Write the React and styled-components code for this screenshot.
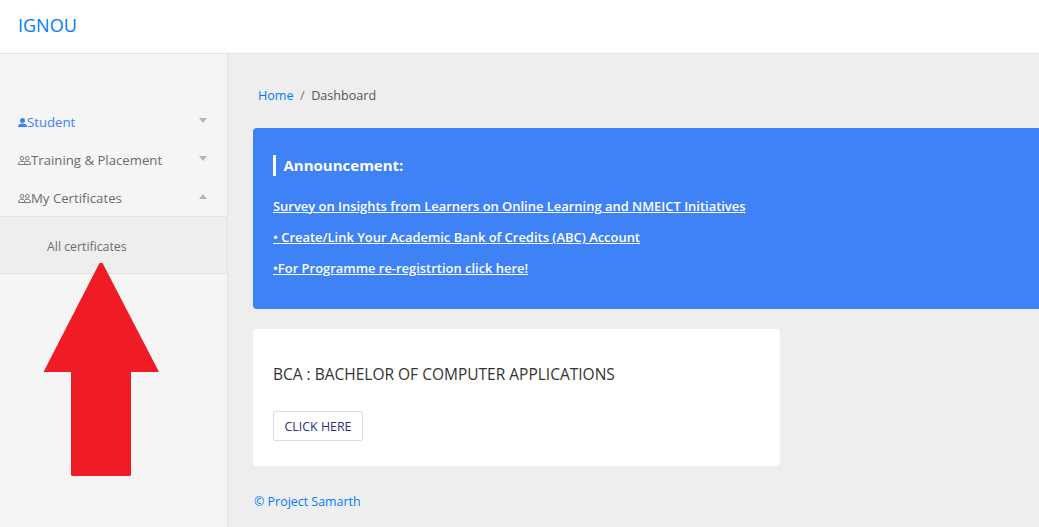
import React from "react";
import styled, { createGlobalStyle } from "styled-components";

const Global = createGlobalStyle`
  html, body { margin: 0; padding: 0; background: #eee; }
  body { font-family: "Open Sans", "Noto Sans", sans-serif; font-size: 13px; }
  * { box-sizing: border-box; }
`;
const Page = styled.div`
  width: 1039px; height: 527px; overflow: hidden; display: flex; flex-direction: column; position: relative;
`;
const Header = styled.header`
  height: 54px; flex: none; background: #fff; border-bottom: 1px solid #e3e3e3;
  display: flex; align-items: center; padding: 0 0 3px 18px;
`;
const Brand = styled.a`color: #007bff; font-size: 18px; line-height: 24px;`;
const Body = styled.div`flex: 1; display: flex; min-height: 0;`;
const Sidebar = styled.aside`
  width: 228px; flex: none; background: #f5f5f5; border-right: 1px solid #e3e3e3; padding-top: 49px;
`;
const NavRow = styled.div`
  height: 38px; display: flex; align-items: center; padding: 0 20px 0 18px;
  color: ${p => (p.$active ? "#3b82f6" : "#6c6c6c")}; font-size: 13.2px;
`;
const NavLabel = styled.span`flex: 1;`;
const Caret = styled.span`
  width: 0; height: 0; border-left: 4.5px solid transparent; border-right: 4.5px solid transparent;
  ${p => (p.$up ? "border-bottom: 5px solid #b5b5b5;" : "border-top: 5px solid #b5b5b5;")}
  margin-top: -3px;
`;
const SubMenu = styled.div`
  height: 58px; background: #eee; border-top: 1px solid #e3e3e3; border-bottom: 1px solid #e3e3e3;
  display: flex; align-items: center; padding: 2px 0 0 47px; color: #6c6c6c; font-size: 12.3px; margin-top: -1px;
`;
const Main = styled.main`flex: 1; padding: 0 0 0 25px; min-width: 0; background: #eee;`;
const Breadcrumb = styled.nav`
  display: flex; align-items: center; height: 18px; margin: 32px 0 0 5px; font-size: 12.6px; color: #555;
`;
const Crumb = styled.a`color: #007bff;`;
const Sep = styled.span`margin: 0 6.5px; color: #777;`;
const Announcement = styled.section`
  width: 830px; height: 181px; margin-top: 24px; background: #3e82f6; border-radius: 4px 0 0 4px;
  padding: 27px 20px 0; color: #fff;
`;
const Title = styled.h2`
  margin: 0 0 22px; height: 21px; border-left: 3px solid #fff; padding-left: 7.5px;
  font-size: 15px; line-height: 21px; font-weight: 700;
`;
const Notice = styled.a`
  display: block; color: #fff; font-weight: 600; font-size: 12.95px; line-height: 17px;
  text-decoration: underline; margin-bottom: 14px;
`;
const Card = styled.section`
  width: 527px; height: 137px; margin-top: 20px; background: #fff; border-radius: 4px;
  padding: 34px 20px 0;
`;
const CardTitle = styled.h3`
  margin: 0 0 26px; font-size: 15.5px; line-height: 22px; font-weight: 400; color: #333;
`;
const Btn = styled.button`
  height: 30px; width: 90px; background: #fff; border: 1px solid #ddd; border-radius: 2px;
  color: #2a2f85; font: 400 12.4px "Open Sans", sans-serif; padding: 0;
`;
const Footer = styled.footer`margin: 27px 0 0 1px; color: #007bff; font-size: 12.45px; line-height: 17px;`;
const ArrowOverlay = styled.svg`position: absolute; left: 44px; top: 263px;`;
const Glyph = styled.svg`flex: none;`;

const UserIcon = () => (
  <Glyph width="9" height="9" viewBox="0 0 9 9">
    <circle cx="4.5" cy="2.5" r="2.5" fill="#3b82f6" />
    <path d="M0 9 C0 6.4 2 5.6 4.5 5.6 S9 6.4 9 9Z" fill="#3b82f6" />
  </Glyph>
);
const UsersIcon = () => (
  <Glyph width="13" height="9" viewBox="0 0 13 9" fill="none" stroke="#6c6c6c" strokeWidth="0.9">
    <circle cx="4" cy="2.3" r="1.8" />
    <circle cx="9.3" cy="2.3" r="1.8" />
    <path d="M.5 8.5 C.5 6 2 5.3 4 5.3 S7 6 7 8.5Z" />
    <path d="M7 5.6 C7.6 5.4 8.4 5.3 9.3 5.3 C11.3 5.3 12.6 6 12.6 8.5H7" />
  </Glyph>
);

export default function App() {
  return (
    <Page>
      <Global />
      <Header><Brand>IGNOU</Brand></Header>
      <Body>
        <Sidebar>
          <NavRow $active><UserIcon /><NavLabel>Student</NavLabel><Caret /></NavRow>
          <NavRow><UsersIcon /><NavLabel>Training &amp; Placement</NavLabel><Caret /></NavRow>
          <NavRow><UsersIcon /><NavLabel>My Certificates</NavLabel><Caret $up /></NavRow>
          <SubMenu>All certificates</SubMenu>
        </Sidebar>
        <Main>
          <Breadcrumb><Crumb>Home</Crumb><Sep>/</Sep>Dashboard</Breadcrumb>
          <Announcement>
            <Title>Announcement:</Title>
            <Notice>Survey on Insights from Learners on Online Learning and NMEICT Initiatives</Notice>
            <Notice>• Create/Link Your Academic Bank of Credits (ABC) Account</Notice>
            <Notice>•For Programme re-registrtion click here!</Notice>
          </Announcement>
          <Card>
            <CardTitle>BCA : BACHELOR OF COMPUTER APPLICATIONS</CardTitle>
            <Btn>CLICK HERE</Btn>
          </Card>
          <Footer>© Project Samarth</Footer>
        </Main>
      </Body>
      <ArrowOverlay width="115" height="214" viewBox="0 0 115 214">
        <path d="M55.5 0 H58.5 L114.5 108 V109 H87 V212 L86 213 H28 L27 212 V109 H0 V108 Z" fill="#ef1c25" />
      </ArrowOverlay>
    </Page>
  );
}
